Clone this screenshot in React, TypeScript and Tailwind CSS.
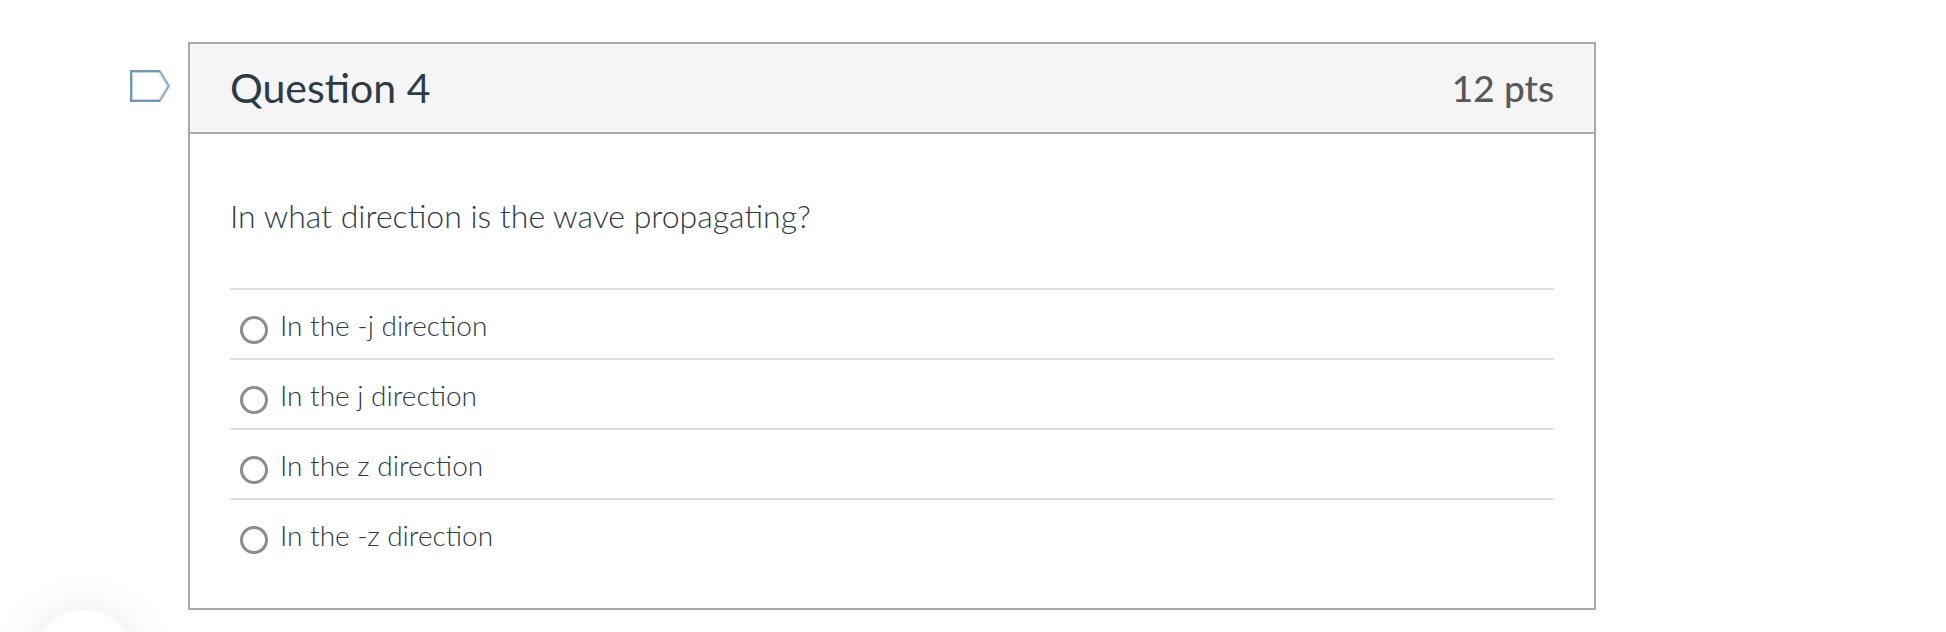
import React, { useState } from 'react'

const ANSWERS = [
  { id: 'neg-j', text: 'In the -j direction' },
  { id: 'pos-j', text: 'In the j direction' },
  { id: 'pos-z', text: 'In the z direction' },
  { id: 'neg-z', text: 'In the -z direction' },
]

const FlagButton: React.FC = () => {
  const [flagged, setFlagged] = useState(false)

  return (
    <button
      type="button"
      aria-label="Flag this question"
      aria-pressed={flagged}
      onClick={() => setFlagged(!flagged)}
      className="mt-7 h-8 w-10 shrink-0"
    >
      <svg className="h-8 w-10" viewBox="0 0 40 32" fill={flagged ? '#fcd23a' : 'none'}>
        <path d="M1.5 1.5H29.5L38.5 16L29.5 30.5H1.5Z" stroke="#c3d3df" strokeWidth="3" />
        <path d="M30 1L39 16L30 31" stroke="#8eabbd" strokeWidth="1.5" />
        <path d="M30 1H1V31H30" stroke="#5786a3" strokeWidth="1.5" />
      </svg>
    </button>
  )
}

export default function App() {
  const [selected, setSelected] = useState<string | null>(null)

  return (
    <div className="min-h-screen bg-white font-['Lato',sans-serif] text-[#2d3b45]">
      <main className="flex items-start gap-[18px] pt-[42px] pr-[350px] pl-[130px]">
        <FlagButton />

        <section className="min-w-0 flex-1 border-2 border-[#aaaaaa]">
          <header className="flex h-[90px] items-center justify-between border-b-2 border-[#aaaaaa] bg-[#f5f5f5] px-10">
            <h1 className="text-[41px] leading-[48px]">Question 4</h1>
            <span className="text-[37px] leading-[48px] font-medium text-[#595959]">12 pts</span>
          </header>

          <div className="px-10 pt-[58px] pb-10">
            <p id="question-text" className="text-[32px] leading-[48px] font-light">
              In what direction is the wave propagating?
            </p>

            <div role="radiogroup" aria-labelledby="question-text" className="mt-12">
              {ANSWERS.map((answer) => (
                <label
                  key={answer.id}
                  className="flex h-[70px] items-start gap-3 border-t-2 border-[#dddddd] px-[10px]"
                >
                  <input
                    type="radio"
                    name="question-4"
                    value={answer.id}
                    checked={selected === answer.id}
                    onChange={() => setSelected(answer.id)}
                    className="mt-[26px] size-7 appearance-none rounded-full border-3 border-[#8c8c8f] bg-white checked:border-8"
                  />
                  <span className="pt-[15px] text-[28px] leading-10 font-light">{answer.text}</span>
                </label>
              ))}
            </div>
          </div>
        </section>
      </main>

      {/* Floating help bubble, mostly below the fold */}
      <button
        type="button"
        aria-label="Help"
        className="fixed -bottom-[82px] left-8 size-[104px] rounded-full bg-white shadow-[0_2px_48px_rgba(0,0,0,0.1)]"
      />
    </div>
  )
}
